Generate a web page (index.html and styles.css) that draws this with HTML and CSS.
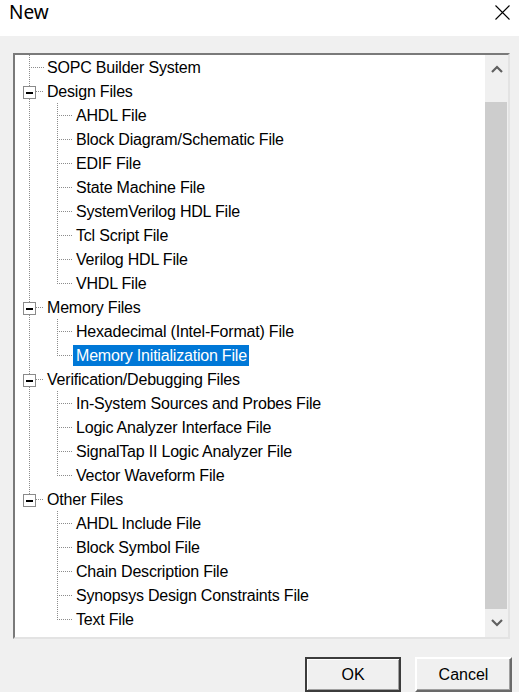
FILE: index.html
```html
<!DOCTYPE html>
<html>
<head>
    <title>New</title>
    <meta charset="UTF-8">
    <link rel="stylesheet" href="styles.css">
</head>
<body>
    <div class="dialog">
        <div class="titlebar">
            <span class="title">New</span>
            <svg class="close" width="15" height="15" viewBox="0 0 15 15">
                <path d="M0.5 0.5 L14.5 14.5 M14.5 0.5 L0.5 14.5" stroke="#000" stroke-width="1.1" fill="none"/>
            </svg>
        </div>

        <div class="content">
            <div class="tree-box">
                <div class="tree">
                    <ul class="level0">
                        <li><div class="row leaf"><span class="stub"></span><span class="label">SOPC Builder System</span></div></li>
                        <li>
                            <div class="row"><span class="toggle"></span><span class="stub short"></span><span class="label">Design Files</span></div>
                            <ul class="level1">
                                <li><div class="row"><span class="stub"></span><span class="label">AHDL File</span></div></li>
                                <li><div class="row"><span class="stub"></span><span class="label">Block Diagram/Schematic File</span></div></li>
                                <li><div class="row"><span class="stub"></span><span class="label">EDIF File</span></div></li>
                                <li><div class="row"><span class="stub"></span><span class="label">State Machine File</span></div></li>
                                <li><div class="row"><span class="stub"></span><span class="label">SystemVerilog HDL File</span></div></li>
                                <li><div class="row"><span class="stub"></span><span class="label">Tcl Script File</span></div></li>
                                <li><div class="row"><span class="stub"></span><span class="label">Verilog HDL File</span></div></li>
                                <li><div class="row"><span class="stub"></span><span class="label">VHDL File</span></div></li>
                            </ul>
                        </li>
                        <li>
                            <div class="row"><span class="toggle"></span><span class="stub short"></span><span class="label">Memory Files</span></div>
                            <ul class="level1">
                                <li><div class="row"><span class="stub"></span><span class="label">Hexadecimal (Intel-Format) File</span></div></li>
                                <li><div class="row"><span class="stub"></span><span class="label selected">Memory Initialization File</span></div></li>
                            </ul>
                        </li>
                        <li>
                            <div class="row"><span class="toggle"></span><span class="stub short"></span><span class="label">Verification/Debugging Files</span></div>
                            <ul class="level1">
                                <li><div class="row"><span class="stub"></span><span class="label">In-System Sources and Probes File</span></div></li>
                                <li><div class="row"><span class="stub"></span><span class="label">Logic Analyzer Interface File</span></div></li>
                                <li><div class="row"><span class="stub"></span><span class="label">SignalTap II Logic Analyzer File</span></div></li>
                                <li><div class="row"><span class="stub"></span><span class="label">Vector Waveform File</span></div></li>
                            </ul>
                        </li>
                        <li>
                            <div class="row"><span class="toggle"></span><span class="stub short"></span><span class="label">Other Files</span></div>
                            <ul class="level1">
                                <li><div class="row"><span class="stub"></span><span class="label">AHDL Include File</span></div></li>
                                <li><div class="row"><span class="stub"></span><span class="label">Block Symbol File</span></div></li>
                                <li><div class="row"><span class="stub"></span><span class="label">Chain Description File</span></div></li>
                                <li><div class="row"><span class="stub"></span><span class="label">Synopsys Design Constraints File</span></div></li>
                                <li><div class="row"><span class="stub"></span><span class="label">Text File</span></div></li>
                            </ul>
                        </li>
                    </ul>
                </div>

                <div class="scrollbar">
                    <div class="arrow">
                        <svg width="12" height="8" viewBox="0 0 12 8"><polyline points="1,7 6,2 11,7" stroke="#606060" stroke-width="2.2" fill="none"/></svg>
                    </div>
                    <div class="track"><div class="thumb"></div></div>
                    <div class="arrow">
                        <svg width="12" height="8" viewBox="0 0 12 8"><polyline points="1,1 6,6 11,1" stroke="#606060" stroke-width="2.2" fill="none"/></svg>
                    </div>
                </div>
            </div>
        </div>

        <div class="buttons">
            <button class="btn default">OK</button>
            <button class="btn">Cancel</button>
        </div>
    </div>
</body>
</html>
```

FILE: styles.css
```css
html, body {
    margin: 0;
    padding: 0;
    height: 100%;
    background: #f0f0f0;
}

.dialog {
    display: flex;
    flex-direction: column;
    height: 100%;
    font-family: "Liberation Sans", Arial, sans-serif;
    color: #000000;
}

.titlebar {
    display: flex;
    justify-content: space-between;
    align-items: flex-start;
    height: 36px;
    padding: 0 9px;
    background: #ffffff;
    flex-shrink: 0;
}

.title {
    font-family: "Noto Sans", sans-serif;
    font-size: 19px;
    line-height: 24px;
}

.close {
    margin-top: 5px;
}

.content {
    padding: 17px 9px 0 13px;
}

.tree-box {
    display: flex;
    height: 582px;
    background: #ffffff;
    border-style: solid;
    border-width: 2px;
    border-color: #7a7a7a #e3e3e3 #e3e3e3 #7a7a7a;
}

.tree {
    flex: 1;
    font-size: 16px;
    letter-spacing: -0.2px;
}

.tree ul {
    list-style: none;
    margin: 0;
    padding: 0;
}

/* dotted connector lines */
.level0 > li {
    background: repeating-linear-gradient(to bottom, #8c8c8c 0 1px, transparent 1px 2px) 14px 0 / 1px 100% no-repeat;
}

.level0 > li:last-child {
    background-size: 1px 13px;
}

.level1 > li {
    background: repeating-linear-gradient(to bottom, #8c8c8c 0 1px, transparent 1px 2px) 42px 0 / 1px 100% no-repeat;
}

.level1 > li:last-child {
    background-size: 1px 13px;
}

.row {
    display: flex;
    align-items: center;
    height: 24px;
    padding-left: 8px;
}

.row.leaf {
    padding-left: 14px;
}

.level1 .row {
    padding-left: 42px;
}

.stub {
    width: 15px;
    height: 1px;
    margin-top: 1px;
    background: repeating-linear-gradient(to right, #8c8c8c 0 1px, transparent 1px 2px);
}

.stub.short {
    width: 8px;
}

.level1 .stub {
    width: 16px;
}

.toggle {
    display: flex;
    align-items: center;
    justify-content: center;
    box-sizing: border-box;
    width: 13px;
    height: 13px;
    margin-top: 3px;
    border: 1px solid #8a8a8a;
    background: #ffffff;
}

.toggle::before {
    content: "";
    width: 7px;
    height: 2px;
    background: #000000;
}

.label {
    line-height: 21px;
    padding: 0 2px 0 3px;
    white-space: nowrap;
}

.label.selected {
    background: #0078d7;
    color: #ffffff;
}

.scrollbar {
    display: flex;
    flex-direction: column;
    width: 23px;
    background: #f0f0f0;
}

.arrow {
    display: flex;
    align-items: center;
    justify-content: center;
    height: 28px;
}

.track {
    flex: 1;
    display: flex;
    padding: 19px 1px 0 0;
}

.thumb {
    flex: 1;
    background: #cdcdcd;
}

.buttons {
    display: flex;
    justify-content: flex-end;
    gap: 14px;
    padding: 18px 7px 0 0;
}

.btn {
    width: 97px;
    height: 35px;
    font-family: "Liberation Sans", Arial, sans-serif;
    font-size: 16px;
    color: #000000;
    background: #f0f0f0;
    border-style: solid;
    border-width: 2px;
    border-color: #ffffff #696969 #696969 #ffffff;
    box-shadow: inset -1px -1px 0 #a0a0a0;
    padding: 0;
}

.btn.default {
    width: 96px;
    border-color: #3c3c3c;
    box-shadow: inset 1px 1px 0 #ffffff, inset -1px -1px 0 #a0a0a0;
}
```
